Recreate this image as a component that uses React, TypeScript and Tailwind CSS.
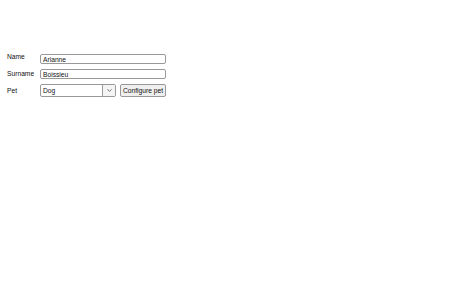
import { ChevronDown } from 'lucide-react';

export default function App() {
  return (
    <div className="h-[297px] w-[474px] bg-white pt-[54px] pl-[7px] font-['Liberation_Sans',Arial,sans-serif] text-[6.7px] text-[#111]">
      <div className="grid grid-cols-[33px_126px] gap-y-[5px] items-center">
        <label className="-mt-[3px]">Name</label>
        <input
          defaultValue="Arianne"
          className="h-[10px] rounded-[2px] border border-[#999] bg-white px-[2px] text-[6.7px] leading-none text-[#111] outline-none"
        />
        <label>Surname</label>
        <input
          defaultValue="Boissieu"
          className="h-[10px] rounded-[2px] border border-[#999] bg-white px-[2px] text-[6.7px] leading-none text-[#111] outline-none"
        />
        <label>Pet</label>
        <div className="flex items-center gap-[4px]">
          <div className="flex h-[13px] w-[76px] items-stretch rounded-[2px] border border-[#999] bg-white">
            <span className="flex flex-1 items-center px-[2px]">Dog</span>
            <span className="flex w-[13px] items-center justify-center border-l border-[#999] bg-[#f4f4f4]">
              <ChevronDown className="h-[7px] w-[7px] text-[#444]" strokeWidth={2.5} />
            </span>
          </div>
          <button className="flex h-[13px] w-[46px] items-center justify-center rounded-[2px] border border-[#999] bg-[#efefef] text-[6.7px] text-[#111]">
            Configure pet
          </button>
        </div>
      </div>
    </div>
  );
}
